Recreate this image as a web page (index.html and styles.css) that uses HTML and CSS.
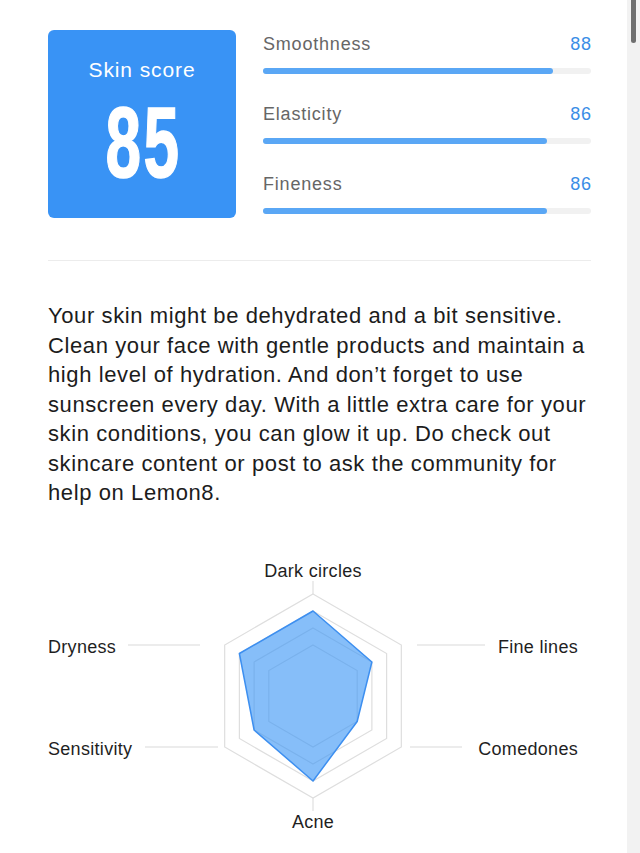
FILE: index.html
```html
<!DOCTYPE html>
<html lang="en">
<head>
<meta charset="utf-8">
<title>Skin score</title>
<link rel="stylesheet" href="styles.css">
</head>
<body>
<div class="page">
  <main class="content">
    <section class="summary">
      <div class="score-card">
        <div class="score-title">Skin score</div>
        <div class="score-value"><span class="score-num">85</span></div>
      </div>
      <div class="metrics">
        <div class="metric">
          <div class="metric-head"><span class="metric-label">Smoothness</span><span class="metric-value">88</span></div>
          <div class="bar"><div class="bar-fill" style="width: 88.4%"></div></div>
        </div>
        <div class="metric">
          <div class="metric-head"><span class="metric-label">Elasticity</span><span class="metric-value">86</span></div>
          <div class="bar"><div class="bar-fill" style="width: 86.5%"></div></div>
        </div>
        <div class="metric">
          <div class="metric-head"><span class="metric-label">Fineness</span><span class="metric-value">86</span></div>
          <div class="bar"><div class="bar-fill" style="width: 86.5%"></div></div>
        </div>
      </div>
    </section>
    <hr class="divider">
    <p class="advice">Your skin might be dehydrated and a bit sensitive.<br>Clean your face with gentle products and maintain a<br>high level of hydration. And don’t forget to use<br>sunscreen every day. With a little extra care for your<br>skin conditions, you can glow it up. Do check out<br>skincare content or post to ask the community for<br>help on Lemon8.</p>
    <svg class="radar" width="544" height="300" viewBox="0 0 544 300">
      <g class="axis">
        <line x1="265" y1="32" x2="265" y2="45"/>
        <line x1="265" y1="249" x2="265" y2="262"/>
        <line x1="80" y1="96" x2="152" y2="96"/>
        <line x1="97" y1="198" x2="170" y2="198"/>
        <line x1="369" y1="96" x2="437" y2="96"/>
        <line x1="362" y1="198" x2="414" y2="198"/>
      </g>
      <g class="rings">
        <polygon points="265,45 353.33,96 353.33,198 265,249 176.67,198 176.67,96"/>
        <polygon points="265,62 338.61,104.5 338.61,189.5 265,232 191.39,189.5 191.39,104.5"/>
        <polygon points="265,79 323.89,113 323.89,181 265,215 206.11,181 206.11,113"/>
        <polygon points="265,96 309.17,121.5 309.17,172.5 265,198 220.83,172.5 220.83,121.5"/>
      </g>
      <polygon class="data" points="265,62 323.89,113 309.17,172.5 265,232 206.11,181 191.39,104.5"/>
      <g class="labels">
        <text x="265" y="28" text-anchor="middle">Dark circles</text>
        <text x="265" y="279" text-anchor="middle">Acne</text>
        <text x="0" y="104">Dryness</text>
        <text x="0" y="206">Sensitivity</text>
        <text x="530" y="104" text-anchor="end">Fine lines</text>
        <text x="530" y="206" text-anchor="end">Comedones</text>
      </g>
    </svg>
  </main>
  <aside class="scrollbar"><div class="thumb"></div></aside>
</div>
</body>
</html>
```

FILE: styles.css
```css
html, body {
  margin: 0;
  padding: 0;
  background: #ffffff;
  overflow: hidden;
}

body {
  font-family: "Liberation Sans", Arial, sans-serif;
  color: #1f1f1f;
}

.page {
  display: flex;
  height: 853px;
}

.content {
  flex: 1;
  padding: 30px 36px 0 48px;
  min-width: 0;
}

.summary {
  display: flex;
  gap: 27px;
}

.score-card {
  width: 188px;
  height: 188px;
  flex: none;
  border-radius: 6px;
  background: #3993f5;
  color: #ffffff;
  display: flex;
  flex-direction: column;
  align-items: center;
  padding-top: 27px;
  box-sizing: border-box;
}

.score-title {
  font-size: 21px;
  line-height: 25px;
  letter-spacing: 0.9px;
}

.score-value {
  margin-top: 10px;
  height: 100px;
  font-size: 100px;
  line-height: 100px;
  font-weight: bold;
  display: flex;
  justify-content: center;
}

.score-num {
  display: inline-block;
  transform: scaleX(0.64);
  letter-spacing: 4px;
  margin-right: -4px;
  -webkit-text-stroke: 1.5px #ffffff;
}

.metrics {
  flex: 1;
  padding-top: 2px;
  display: flex;
  flex-direction: column;
  gap: 28px;
}

.metric-head {
  display: flex;
  justify-content: space-between;
  font-size: 18px;
  line-height: 24px;
  letter-spacing: 0.8px;
}

.metric-label {
  color: #666666;
}

.metric-value {
  color: #3a8de6;
  letter-spacing: 0.8px;
  margin-right: -0.8px;
}

.bar {
  margin-top: 12px;
  height: 6px;
  border-radius: 3px;
  background: #f1f1f1;
}

.bar-fill {
  height: 100%;
  border-radius: 3px;
  background: #5aa7f5;
}

.divider {
  margin: 42px 0 0 0;
  border: 0;
  height: 1px;
  background: #ececec;
}

.advice {
  margin: 40px 0 0 0;
  font-size: 22px;
  line-height: 29.5px;
  letter-spacing: 0.6px;
  color: #1c1c1c;
  white-space: nowrap;
}

.radar {
  display: block;
  margin-top: 41px;
}

.axis line {
  stroke: #e6e6e6;
  stroke-width: 1.5;
}

.rings polygon {
  fill: none;
  stroke: #dedede;
  stroke-width: 1.2;
}

.data {
  fill: rgba(60, 150, 245, 0.62);
  stroke: #3d8ff0;
  stroke-width: 1.5;
  stroke-linejoin: round;
}

.labels text {
  font-family: "Liberation Sans", Arial, sans-serif;
  font-size: 18px;
  letter-spacing: 0.3px;
  fill: #1f1f1f;
}

.scrollbar {
  width: 13px;
  flex: none;
  background: #f2f2f2;
  position: relative;
}

.thumb {
  position: absolute;
  left: 4px;
  top: 0;
  width: 5px;
  height: 43px;
  border-radius: 0 0 3px 3px;
  background: #6f6f6f;
}
```
